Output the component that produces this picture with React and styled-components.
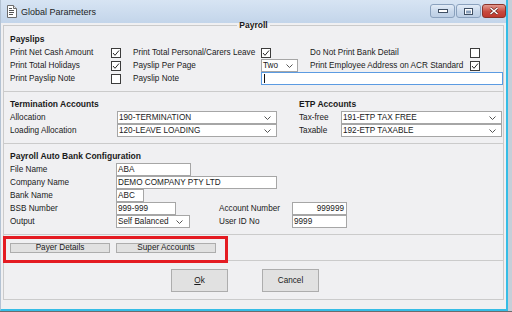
import React from "react";
import styled, { createGlobalStyle } from "styled-components";

const GlobalStyle = createGlobalStyle`
  html, body {
    margin: 0;
    padding: 0;
  }
  body {
    width: 512px;
    height: 312px;
    overflow: hidden;
    font-family: "Liberation Sans", Arial, sans-serif;
    color: #1a1a1a;
  }
`;

const Screen = styled.div`
  width: 512px;
  height: 312px;
  background: linear-gradient(to bottom, #c6cfd9 0, #c6cfd9 311px, #6c6c6c 311px);
`;

const Window = styled.div`
  box-sizing: border-box;
  width: 508px;
  height: 311px;
  display: flex;
  flex-direction: column;
  border-left: 1px solid #b3c2d3;
  border-right: 2px solid #35bde6;
  border-bottom: 2px solid #35bde6;
  background: #f0f0f2;
`;

const TitleBar = styled.div`
  height: 23px;
  flex: none;
  display: flex;
  align-items: center;
  padding-left: 6px;
  background: linear-gradient(to bottom, #d7e4f3, #c3d5ea);
`;

const Title = styled.span`
  margin-left: 4px;
  font-size: 9px;
  color: #1e1e1e;
`;

const Caption = styled.div`
  margin-left: auto;
  align-self: flex-start;
  margin-top: 4px;
  display: flex;
  gap: 1px;
`;

const CapButton = styled.div`
  box-sizing: border-box;
  width: ${(p) => p.$w}px;
  height: 14px;
  display: flex;
  align-items: center;
  justify-content: center;
  border: 1px solid ${(p) => (p.$close ? "#8a3329" : "#8aa1bd")};
  border-radius: 3px;
  background: ${(p) =>
    p.$close
      ? "linear-gradient(to bottom, #e39a8f, #c84a3e 55%, #c0392e)"
      : "linear-gradient(to bottom, #e3ecf7, #c7d7ea 55%, #bccee4)"};
`;

const Client = styled.div`
  flex: 1;
  padding-left: 2px;
`;

const Group = styled.fieldset`
  box-sizing: border-box;
  width: 501px;
  margin: -2px 0 0 0;
  padding: 0;
  min-width: 0;
  border: 1px solid #cbcbcb;
`;

const Legend = styled.legend`
  margin: 0 auto;
  padding: 0 2px;
  font-size: 8.5px;
  line-height: 9px;
  font-weight: bold;
`;

const Section = styled.div`
  padding: ${(p) => p.$pt}px 0 ${(p) => p.$pb}px 6px;
  border-bottom: ${(p) => (p.$last ? "none" : "1px solid #cbcbcb")};
`;

const PayslipGrid = styled.div`
  display: grid;
  grid-template-columns: 101px 22px 128px 49px 160px 1fr;
  grid-auto-rows: 13px;
  align-items: center;
`;

const Heading = styled.div`
  grid-column: 1 / -1;
  font-size: 8.5px;
  line-height: 13px;
  font-weight: bold;
  white-space: nowrap;
`;

const Label = styled.span`
  font-size: 8.2px;
  line-height: 13px;
  white-space: nowrap;
`;

const CheckBox = styled.span`
  box-sizing: border-box;
  width: 10px;
  height: 10px;
  border: 1px solid #3c3c3c;
  background: #fff;
  display: flex;
  align-items: center;
  justify-content: center;
`;

const Field = styled.div`
  box-sizing: border-box;
  width: ${(p) => p.$w}px;
  height: 13px;
  grid-column: ${(p) => p.$span || "auto"};
  display: flex;
  align-items: center;
  justify-content: ${(p) => (p.$right ? "flex-end" : "flex-start")};
  padding: 0 ${(p) => (p.$right ? 2 : 1)}px 0 1px;
  border: 1px solid ${(p) => (p.$focus ? "#5b9be2" : "#a6a6a6")};
  background: #fff;
  font-size: 8.2px;
  line-height: 11px;
  white-space: nowrap;
`;

const Chevron = styled.svg`
  margin-left: auto;
  margin-right: ${(p) => p.$mr || 3}px;
  flex: none;
`;

const Caret = styled.span`
  width: 1px;
  height: 9px;
  background: #111;
  margin-left: 1px;
`;

const AccountsRow = styled.div`
  display: flex;
  gap: 22px;
`;

const AccountGrid = styled.div`
  display: grid;
  grid-template-columns: ${(p) => p.$label}px ${(p) => p.$field}px;
  grid-auto-rows: 13px;
  align-items: center;
`;

const BankGrid = styled.div`
  display: grid;
  grid-template-columns: 106px 103px 73px 55px;
  grid-auto-rows: 13px;
  align-items: center;
`;

const Highlight = styled.div`
  box-sizing: border-box;
  width: 219px;
  height: 21px;
  margin: 4px 0 0 -4px;
  padding: 4px 0 0 4px;
  display: flex;
  gap: 6px;
  outline: 3px solid #e41b22;
`;

const SmallButton = styled.div`
  box-sizing: border-box;
  width: 100px;
  height: 10px;
  display: flex;
  align-items: center;
  justify-content: center;
  border: 1px solid #adadad;
  background: #e1e1e1;
  font-size: 8.2px;
  line-height: 8px;
`;

const Footer = styled.div`
  display: flex;
  gap: 34px;
  padding-left: 161px;
`;

const DialogButton = styled.div`
  box-sizing: border-box;
  width: 57px;
  height: 23px;
  display: flex;
  align-items: center;
  justify-content: center;
  border: 1px solid #adadad;
  background: #e1e1e1;
  font-size: 8.2px;
`;

const Mnemonic = styled.span`
  text-decoration: underline;
`;

function Check({ checked }) {
  return (
    <CheckBox>
      {checked && (
        <svg width="8" height="8" viewBox="0 0 8 8">
          <polyline points="1,4 3,6.3 7,1.5" fill="none" stroke="#2a2a2a" strokeWidth="1" />
        </svg>
      )}
    </CheckBox>
  );
}

function Combo({ value, w, mr, span }) {
  return (
    <Field $w={w} $span={span}>
      {value}
      <Chevron width="7" height="4" viewBox="0 0 7 4" $mr={mr}>
        <polyline points="0.5,0.5 3.5,3.5 6.5,0.5" fill="none" stroke="#555" strokeWidth="1" />
      </Chevron>
    </Field>
  );
}

function DocIcon() {
  return (
    <svg width="10" height="13" viewBox="0 0 10 13">
      <path d="M0.5 0.5 H6.5 L9.5 3.5 V12.5 H0.5 Z" fill="#fff" stroke="#6d6d6d" />
      <path d="M6.5 0.5 V3.5 H9.5" fill="#e6e6e6" stroke="#6d6d6d" />
      <rect x="2" y="5" width="5" height="1" fill="#555" />
      <rect x="2" y="7" width="5" height="1" fill="#555" />
      <rect x="2" y="9" width="4" height="1" fill="#555" />
      <rect x="2" y="3" width="3" height="1" fill="#555" />
    </svg>
  );
}

export default function App() {
  return (
    <Screen>
      <GlobalStyle />
      <Window>
        <TitleBar>
          <DocIcon />
          <Title>Global Parameters</Title>
          <Caption>
            <CapButton $w={25}>
              <svg width="10" height="4" viewBox="0 0 10 4">
                <rect x="0.5" y="0.5" width="9" height="3" fill="#fff" stroke="#3f4f63" />
              </svg>
            </CapButton>
            <CapButton $w={25}>
              <svg width="9" height="7" viewBox="0 0 9 7">
                <rect x="0.5" y="0.5" width="8" height="6" fill="#fff" stroke="#3f4f63" />
                <rect x="2" y="2.5" width="5" height="3" fill="#8aa1bd" />
              </svg>
            </CapButton>
            <CapButton $w={24} $close>
              <svg width="10" height="8" viewBox="0 0 10 8">
                <path d="M1.5 1 L8.5 7 M8.5 1 L1.5 7" stroke="#5a1b15" strokeWidth="2.6" />
                <path d="M1.5 1 L8.5 7 M8.5 1 L1.5 7" stroke="#fff" strokeWidth="1.6" />
              </svg>
            </CapButton>
          </Caption>
        </TitleBar>

        <Client>
          <Group>
            <Legend>Payroll</Legend>

            <Section $pt={3} $pb={6}>
              <PayslipGrid>
                <Heading>Payslips</Heading>
                <Label>Print Net Cash Amount</Label>
                <Check checked />
                <Label>Print Total Personal/Carers Leave</Label>
                <Check checked />
                <Label>Do Not Print Bank Detail</Label>
                <Check />

                <Label>Print Total Holidays</Label>
                <Check checked />
                <Label>Payslip Per Page</Label>
                <Combo value="Two" w={37} mr={3} />
                <Label>Print Employee Address on ACR Standard</Label>
                <Check checked />

                <Label>Print Payslip Note</Label>
                <Check />
                <Label>Payslip Note</Label>
                <Field $w={242} $span="4 / -1" $focus>
                  <Caret />
                </Field>
              </PayslipGrid>
            </Section>

            <Section $pt={6} $pb={6}>
              <AccountsRow>
                <AccountGrid $label={107} $field={160}>
                  <Heading>Termination Accounts</Heading>
                  <Label>Allocation</Label>
                  <Combo value="190-TERMINATION" w={160} mr={4} />
                  <Label>Loading Allocation</Label>
                  <Combo value="120-LEAVE LOADING" w={160} mr={4} />
                </AccountGrid>
                <AccountGrid $label={42} $field={161}>
                  <Heading>ETP Accounts</Heading>
                  <Label>Tax-free</Label>
                  <Combo value="191-ETP TAX FREE" w={161} mr={4} />
                  <Label>Taxable</Label>
                  <Combo value="192-ETP TAXABLE" w={161} mr={4} />
                </AccountGrid>
              </AccountsRow>
            </Section>

            <Section $pt={6} $pb={6}>
              <BankGrid>
                <Heading>Payroll Auto Bank Configuration</Heading>
                <Label>File Name</Label>
                <Field $w={75} $span="2 / -1">ABA</Field>
                <Label>Company Name</Label>
                <Field $w={161} $span="2 / -1">DEMO COMPANY PTY LTD</Field>
                <Label>Bank Name</Label>
                <Field $w={28} $span="2 / -1">ABC</Field>
                <Label>BSB Number</Label>
                <Field $w={60}>999-999</Field>
                <Label>Account Number</Label>
                <Field $w={55} $right>999999</Field>
                <Label>Output</Label>
                <Combo value="Self Balanced" w={74} mr={5} />
                <Label>User ID No</Label>
                <Field $w={55}>9999</Field>
              </BankGrid>
            </Section>

            <Section $pt={0} $pb={0}>
              <Highlight>
                <SmallButton>Payer Details</SmallButton>
                <SmallButton>Super Accounts</SmallButton>
              </Highlight>
            </Section>

            <Section $pt={8} $pb={7} $last>
              <Footer>
                <DialogButton>
                  <Mnemonic>O</Mnemonic>k
                </DialogButton>
                <DialogButton>Cancel</DialogButton>
              </Footer>
            </Section>
          </Group>
        </Client>
      </Window>
    </Screen>
  );
}
